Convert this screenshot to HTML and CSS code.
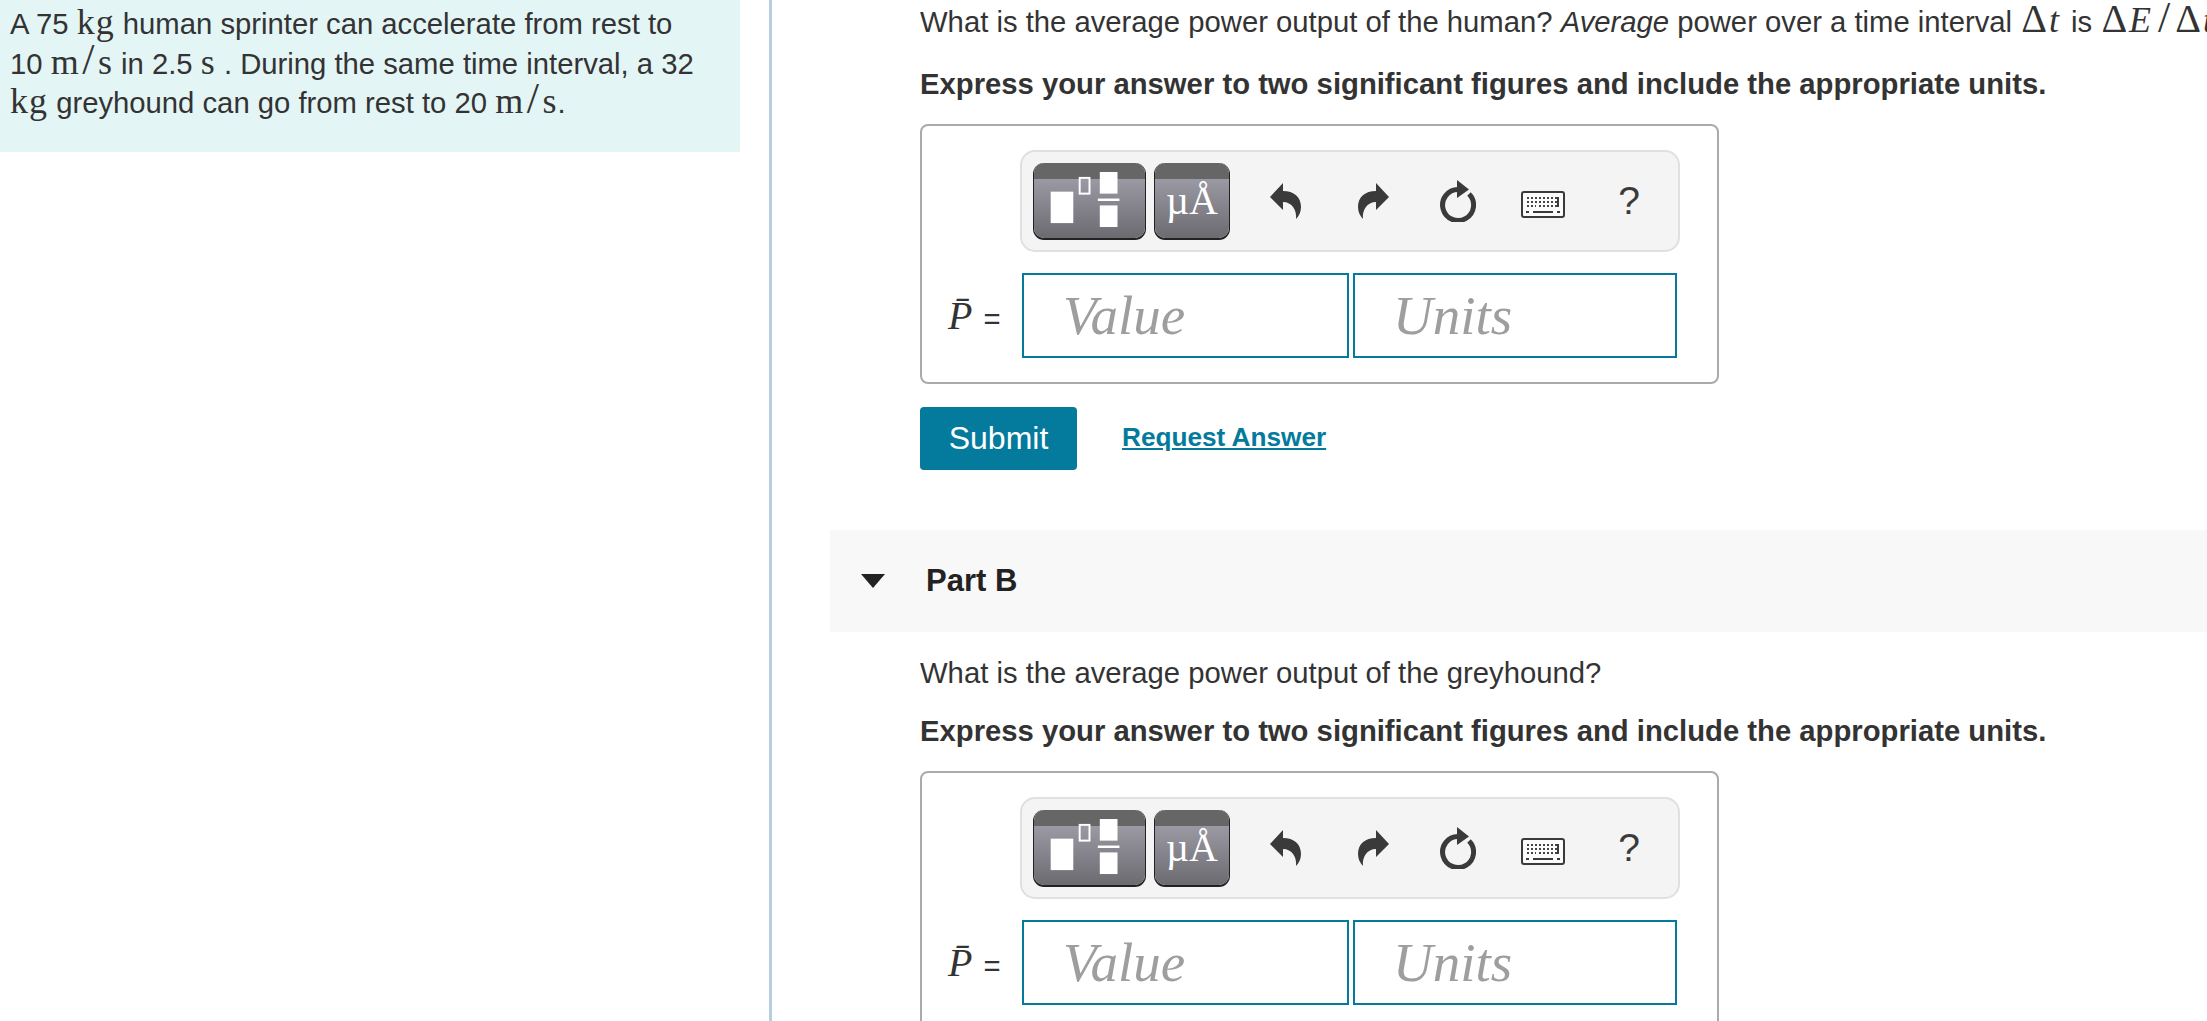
FILE: index.html
```html
<!DOCTYPE html>
<html lang="en">
<head>
    <meta charset="UTF-8">
    <title>Part A</title>
    <link rel="stylesheet" href="styles.css">
</head>
<body>
    <svg class="defs" width="0" height="0">
        <symbol id="templates" viewBox="0 0 113 76">
            <rect x="17" y="29" width="23" height="32" fill="#fff"/>
            <rect x="46.5" y="15" width="10" height="16" fill="none" stroke="#fff" stroke-width="2"/>
            <rect x="67" y="9" width="18" height="22" fill="#fff"/>
            <rect x="65" y="36" width="22" height="2.5" fill="#fff"/>
            <rect x="67" y="43" width="18" height="22" fill="#fff"/>
        </symbol>
        <symbol id="undo" viewBox="0 0 32 38">
            <path d="M0 14 L13 0 V8 C24 8 31 14 31 24 C31 29 29 33 26 36 C27 27 22 19 13 19 V27 Z" fill="#3a3a3a"/>
        </symbol>
        <symbol id="reset" viewBox="0 0 36 42">
            <path d="M18 9.500 A15.500 15.500 0 1 0 29 14" fill="none" stroke="#3a3a3a" stroke-width="5"/>
            <path d="M17 0 L29 9.500 L17 18 Z" fill="#3a3a3a"/>
        </symbol>
        <symbol id="keyboard" viewBox="0 0 44 27">
            <rect x="1" y="1" width="42" height="25" rx="2" fill="#fbfbfb" stroke="#3a3a3a" stroke-width="2"/>
            <path d="M6 7 H37 M6 11 H37 M6 15 H15 M18 15 H37" stroke="#444" stroke-width="2.200" stroke-dasharray="2 2" fill="none"/>
            <path d="M37 6 V16 M5 21 H8 M12 21 H32 M36 21 H39" stroke="#3a3a3a" stroke-width="2" fill="none"/>
        </symbol>
    </svg>
    <div class="page">
        <div class="sidebar">
            <div class="statement">
                A 75 <span class="math">kg</span> human sprinter can accelerate from rest to<br>
                10 <span class="math">m<span class="slash">/</span>s</span> in 2.5 <span class="math">s</span> . During the same time interval, a 32<br>
                <span class="math">kg</span> greyhound can go from rest to 20 <span class="math">m<span class="slash">/</span>s</span>.
            </div>
        </div>
        <div class="main">
            <div class="part firstPart">
                <p class="question">What is the average power output of the human? <i>Average</i> power over a time interval <span class="math"><span class="delta">&Delta;</span><i>t</i></span> is <span class="math"><span class="delta">&Delta;</span><i>E</i><span class="slash">/</span><span class="delta">&Delta;</span><i>t</i></span>.</p>
                <p class="instruction">Express your answer to two significant figures and include the appropriate units.</p>
                <div class="answerBox">
                    <div class="toolbar">
                        <button type="button" class="mathBtn templatesBtn"><svg><use href="#templates"/></svg></button>
                        <button type="button" class="mathBtn symbolsBtn">&micro;&Aring;</button>
                        <svg class="icon undoIcon"><use href="#undo"/></svg>
                        <svg class="icon redoIcon"><use href="#undo"/></svg>
                        <svg class="icon resetIcon"><use href="#reset"/></svg>
                        <svg class="icon keyboardIcon"><use href="#keyboard"/></svg>
                        <span class="helpIcon">?</span>
                    </div>
                    <div class="answerRow">
                        <span class="label"><span class="pBar">P&#772;</span> =</span>
                        <input class="field" type="text" placeholder="Value">
                        <input class="field unitField" type="text" placeholder="Units">
                    </div>
                </div>
                <div class="actions">
                    <button type="button" class="submit">Submit</button>
                    <a class="request" href="#">Request Answer</a>
                </div>
            </div>
            <div class="partHeader">
                <span class="caret"></span>
                <span class="partTitle">Part B</span>
            </div>
            <div class="part">
                <p class="question questionB">What is the average power output of the greyhound?</p>
                <p class="instruction instructionB">Express your answer to two significant figures and include the appropriate units.</p>
                <div class="answerBox">
                    <div class="toolbar">
                        <button type="button" class="mathBtn templatesBtn"><svg><use href="#templates"/></svg></button>
                        <button type="button" class="mathBtn symbolsBtn">&micro;&Aring;</button>
                        <svg class="icon undoIcon"><use href="#undo"/></svg>
                        <svg class="icon redoIcon"><use href="#undo"/></svg>
                        <svg class="icon resetIcon"><use href="#reset"/></svg>
                        <svg class="icon keyboardIcon"><use href="#keyboard"/></svg>
                        <span class="helpIcon">?</span>
                    </div>
                    <div class="answerRow">
                        <span class="label"><span class="pBar">P&#772;</span> =</span>
                        <input class="field" type="text" placeholder="Value">
                        <input class="field unitField" type="text" placeholder="Units">
                    </div>
                </div>
            </div>
        </div>
    </div>
</body>
</html>
```

FILE: styles.css
```css
html, body{
    margin: 0;
    height: 100%;
    overflow: hidden;
    background-color: #fff;
}
body{
    font-family: "Liberation Sans", Arial, sans-serif;
    font-size: 29.250px;
    color: #333;
}
.defs{
    display: block;
    height: 0;
}
.page{
    display: flex;
    height: 1021px;
    overflow: hidden;
}
.sidebar{
    flex: none;
    width: 740px;
}
.statement{
    height: 152px;
    box-sizing: border-box;
    padding: 5px 0 0 10px;
    background-color: #e4f5f6;
    line-height: 39.500px;
    white-space: nowrap;
}
.math{
    font-family: "Liberation Serif", "Times New Roman", serif;
    font-size: 36px;
    line-height: 0;
    letter-spacing: 1px;
}
.slash{
    padding: 0 2.500px;
    font-size: 44px;
    font-weight: normal;
    line-height: 0;
}
.delta{
    margin-right: 1px;
    font-size: 40px;
    line-height: 0;
}
.main{
    flex: none;
    width: 1435px;
    margin-left: 29px;
    padding-left: 58px;
    border-left: 3px solid #b7cde0;
    overflow: hidden;
}
.part{
    padding-left: 90px;
}
.question{
    margin: 0;
    white-space: nowrap;
    line-height: 44px;
}
.question .math{
    margin: 0 1px;
}
.question .math i{
    margin-right: 2px;
}
.question .slash{
    padding: 0 4px;
}
.questionB{
    padding-top: 19px;
}
.instruction{
    margin: 18px 0 0;
    font-weight: bold;
    line-height: 44px;
}
.instructionB{
    margin-top: 14px;
}
.answerBox{
    box-sizing: border-box;
    width: 799px;
    height: 260px;
    margin-top: 18px;
    padding: 24px 40px 0 80px;
    border: 2px solid #aaa;
    border-radius: 8px;
}
.toolbar{
    display: flex;
    align-items: center;
    box-sizing: border-box;
    width: 660px;
    height: 102px;
    margin-left: 18px;
    padding-left: 12px;
    background-color: #f4f4f4;
    border: 2px solid #e0e0e0;
    border-radius: 15px;
}
.mathBtn{
    flex: none;
    height: 75px;
    margin-top: -2px;
    padding: 0;
    border: 0;
    border-radius: 10px;
    box-shadow: 0 1px 0 1px #222;
    background: linear-gradient(#666 0, #666 21%, #9b9aa4 21%, #6c6b71 100%);
    color: #fff;
}
.templatesBtn{
    width: 111px;
}
.templatesBtn svg{
    display: block;
    width: 111px;
    height: 75px;
}
.symbolsBtn{
    width: 74px;
    margin-left: 10px;
    padding-top: 2px;
    font-family: "Liberation Serif", serif;
    font-size: 40px;
    line-height: 60px;
}
.icon{
    flex: none;
}
.undoIcon{
    width: 32px;
    height: 38px;
    margin-left: 41px;
    margin-top: 2px;
}
.redoIcon{
    width: 32px;
    height: 38px;
    margin-left: 55px;
    margin-top: 2px;
    transform: scaleX(-1);
}
.resetIcon{
    width: 36px;
    height: 42px;
    margin-left: 51px;
}
.keyboardIcon{
    width: 44px;
    height: 27px;
    margin-left: 45px;
    margin-top: 6px;
}
.helpIcon{
    width: 40px;
    margin-left: 44px;
    text-align: center;
    font-size: 39px;
    color: #3a3a3a;
}
.answerRow{
    display: flex;
    align-items: center;
    margin-top: 21px;
}
.label{
    flex: none;
    width: 100px;
    margin-left: -80px;
    padding-left: 26px;
    box-sizing: border-box;
    white-space: nowrap;
    word-spacing: 3px;
    font-size: 29.250px;
}
.pBar{
    font-family: "Liberation Serif", serif;
    font-style: italic;
    font-size: 40px;
}
.field{
    box-sizing: border-box;
    width: 327px;
    height: 85px;
    padding: 0 0 0 39px;
    border: 2px solid #047a9c;
    background-color: #fff;
    outline: none;
    font-family: "Liberation Serif", serif;
    font-style: italic;
    font-size: 55px;
}
.field::placeholder{
    color: #9e9e9e;
    opacity: 1;
}
.unitField{
    width: 324px;
    margin-left: 4px;
    padding-left: 38px;
}
.actions{
    display: flex;
    align-items: center;
    margin-top: 23px;
}
.submit{
    width: 157px;
    height: 63px;
    padding: 0;
    border: 0;
    border-radius: 4px;
    background-color: #047a9c;
    font-family: "Liberation Sans", sans-serif;
    font-size: 32px;
    color: #fff;
}
.request{
    margin-left: 45px;
    margin-bottom: 2px;
    font-weight: bold;
    font-size: 26.200px;
    color: #047a9c;
}
.partHeader{
    display: flex;
    align-items: center;
    height: 102px;
    margin-top: 60px;
    background-color: #f8f8f8;
}
.caret{
    width: 0;
    height: 0;
    margin-left: 31px;
    border-left: 12px solid transparent;
    border-right: 12px solid transparent;
    border-top: 14px solid #222;
}
.partTitle{
    margin-left: 41px;
    font-weight: bold;
    font-size: 31px;
    color: #222;
}
```
